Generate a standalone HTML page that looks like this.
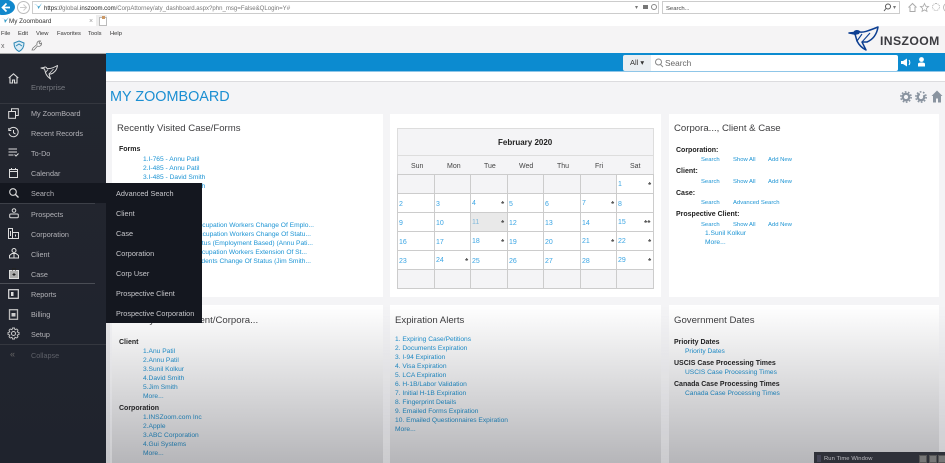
<!DOCTYPE html>
<html><head><meta charset="utf-8"><title>My Zoomboard</title>
<style>
html,body{margin:0;padding:0}
body{width:945px;height:463px;position:relative;overflow:hidden;background:#f4f4f6;font-family:"Liberation Sans",sans-serif}
#r div,#r span.a,#r svg{position:absolute}
.t{white-space:nowrap;line-height:10px;height:10px}
.l{color:#1c94d4;font-size:6.65px;margin-top:1px}
.b{color:#222;font-size:7px;font-weight:bold;margin-top:2px}
.h{color:#3d3d3f;font-size:9.6px;line-height:14px;height:14px;white-space:nowrap;margin-top:1px}
.m{color:#b2b2b7;font-size:7.25px;left:31px;margin-top:1px}
.s{color:#c8c8cc;font-size:7.3px;left:116px;margin-top:1px}
.c{color:#444;font-size:7px;margin-top:2px}
.d{color:#3aa5e4;font-size:7px;margin-top:2px}
.star{color:#555;font-size:5px;margin-top:2px}
.cm{color:#333;font-size:5.8px;margin-top:2px}
.q{font-size:5.9px}
svg{overflow:visible}
</style></head><body><div id="r" style="position:absolute;left:0;top:0;width:945px;height:463px;overflow:hidden;filter:blur(.3px)">

<!-- browser chrome -->
<div style="left:0;top:0;width:945px;height:26px;background:#fff"></div>
<div style="left:0;top:26px;width:945px;height:27px;background:#f5f4f5"></div>
<div style="left:0;top:53px;width:945px;height:1px;background:#aaa"></div>
<div style="left:-9px;top:-1px;width:24px;height:16px;border-radius:50%;background:#1188cc"></div>
<svg style="left:0;top:0" width="16" height="15"><path d="M10 7.5H3M6.5 3.5L2.5 7.5L6.5 11.5" fill="none" stroke="#fff" stroke-width="1.7"/></svg>
<div style="left:17px;top:1px;width:11px;height:11px;border:1px solid #bbb;border-radius:50%"></div>
<svg style="left:19px;top:3px" width="9" height="9"><path d="M7 4.5H1M4.5 1.5L7.5 4.5L4.5 7.5" fill="none" stroke="#ccc" stroke-width="1"/></svg>
<div style="left:32px;top:1px;width:625px;height:11px;border:1px solid #ccc"></div>
<svg style="left:34px;top:3px" width="9" height="8"><path d="M0 1L3 2L4.5 6L8 0L5 3.5Z" fill="#3c9fc9"/></svg>
<div class="t" style="left:44px;top:4px;font-size:6.05px;color:#777"><span style="color:#222">https://</span>global.<span style="color:#222">inszoom.com</span>/CorpAttorney/aty_dashboard.aspx?phn_msg=False&amp;QLogin=Y#</div>
<div class="t" style="left:635px;top:3px;font-size:6px;color:#777">▾</div>
<div style="left:643px;top:5px;width:5px;height:4px;background:#777"></div>
<div style="left:651px;top:4px;width:4px;height:4px;border:1px solid #888;border-radius:50%"></div>
<div style="left:662px;top:1px;width:236px;height:11px;border:1px solid #ccc"></div>
<div class="t" style="left:666px;top:4px;font-size:5.9px;color:#444">Search...</div>
<svg style="left:883px;top:3px" width="9" height="9"><circle cx="5" cy="3.5" r="2.5" fill="none" stroke="#555"/><path d="M3 5.5L1 8" stroke="#555"/></svg>
<div class="t" style="left:893px;top:3px;font-size:6px;color:#777">▾</div>
<svg style="left:908px;top:3px" width="9" height="9"><path d="M0.5 4.5L4.5 .5L8.5 4.5M2 4V8.5H7V4" fill="none" stroke="#aaa"/></svg>
<svg style="left:920px;top:3px" width="9" height="9"><path d="M4.5 .5L5.7 3.2L8.6 3.5L6.4 5.4L7 8.4L4.5 6.9L2 8.4L2.6 5.4L.4 3.5L3.3 3.2Z" fill="none" stroke="#aaa" stroke-width=".8"/></svg>
<div style="left:932px;top:3px;width:6px;height:6px;border:1.5px dotted #aaa;border-radius:50%"></div>
<div style="left:943px;top:3px;width:6px;height:7px;border:1px solid #bbb;border-radius:50%"></div>

<div style="left:0;top:15px;width:96px;height:11px;background:#fff"></div>
<div style="left:96px;top:15px;width:11px;height:11px;background:#eee"></div>
<div style="left:99px;top:17px;width:6px;height:7px;background:#fff;border:1px solid #bbb"></div>
<div style="left:102px;top:16px;width:3px;height:3px;background:#c96"></div>
<svg style="left:1px;top:17px" width="8" height="7"><path d="M0 1L3 2L4 6L8 0L5 3Z" fill="#3c9fc9"/></svg>
<div class="t" style="left:9px;top:17px;font-size:6.3px;color:#333">My Zoomboard</div>
<div class="t" style="left:89px;top:17px;font-size:7px;color:#999">×</div>

<div class="t cm" style="left:1px;top:27px">File</div>
<div class="t cm" style="left:18px;top:27px">Edit</div>
<div class="t cm" style="left:36px;top:27px">View</div>
<div class="t cm" style="left:57px;top:27px">Favorites</div>
<div class="t cm" style="left:88px;top:27px">Tools</div>
<div class="t cm" style="left:110px;top:27px">Help</div>
<div class="t" style="left:1px;top:42px;font-size:7px;color:#666">x</div>
<svg style="left:13px;top:40px" width="12" height="12"><path d="M6 1L11 3C11 7 9 10 6 11.5C3 10 1 7 1 3Z" fill="#dcecf5" stroke="#2d88b5"/><path d="M3 6L6 4L9 6" fill="none" stroke="#2d88b5"/></svg>
<svg style="left:31px;top:40px" width="11" height="11"><path d="M1 10L2 8L6 4.5C5.5 2.5 7 .5 9.5 1L8 3L9 4L10.5 3C10.8 5.5 8.5 7 6.5 6L3 10Z" fill="#fff" stroke="#777" stroke-width=".8"/></svg>

<!-- logo -->
<svg style="left:848px;top:26px" width="32" height="26" viewBox="0 0 32 26"><path d="M1 7L6 6.5C7 4.5 10 4 12 6C15 6.8 20 5 30 1C29 7 26 13 19 16L14 16L18 24C14 22 11 19 9 15L7 8Z" fill="none" stroke="#0d3f92" stroke-width="1.5" stroke-linejoin="round"/><path d="M1 7L6 6.5C7 4.5 10 4 12 6L11 8L7 9Z" fill="#0d3f92"/><path d="M14 16L22 7M9 15L14 8" stroke="#0d3f92" stroke-width="1.1" fill="none"/></svg>
<div class="t" style="left:880px;top:34px;height:14px;line-height:14px;font-size:12.2px;font-weight:bold;color:#3b3b40;letter-spacing:.4px">INSZOOM</div>

<!-- blue bar -->
<div style="left:106px;top:53px;width:839px;height:18px;background:#0c8bd0"></div>
<div style="left:106px;top:71px;width:839px;height:1px;background:#8fc6e8"></div>
<div style="left:106px;top:72px;width:839px;height:9px;background:#fff"></div>
<div style="left:106px;top:81px;width:839px;height:1px;background:#dcdcdf"></div>
<div style="left:623px;top:55px;width:29px;height:16px;background:#e9eef2;border-radius:2px 0 0 2px"></div>
<div class="t" style="left:630px;top:58px;font-size:7.5px;color:#333">All ▾</div>
<div style="left:651px;top:55px;width:247px;height:16px;background:#fff;border-radius:0 2px 2px 0"></div>
<svg style="left:654px;top:58px" width="10" height="10"><circle cx="4.5" cy="4" r="3" fill="none" stroke="#888"/><path d="M6.5 6.5L9 9" stroke="#888"/></svg>
<div class="t" style="left:665px;top:58px;font-size:8.3px;color:#666">Search</div>
<svg style="left:901px;top:58px" width="11" height="9"><path d="M0 3H2L6 .5V8.5L2 6H0Z" fill="#fff"/><path d="M8 2C9 3.5 9 5.5 8 7" stroke="#fff" fill="none"/></svg>
<svg style="left:917px;top:57px" width="9" height="10"><circle cx="4.5" cy="2.5" r="2.4" fill="#fff"/><path d="M1 9.5V7C1 6 2 5.5 4.5 5.5C7 5.5 8 6 8 7V9.5Z" fill="#fff"/></svg>

<!-- content header -->
<div class="t" style="left:110px;top:87px;height:20px;line-height:20px;font-size:14.4px;color:#1b8fd2">MY ZOOMBOARD</div>
<svg style="left:900px;top:91px" width="12" height="12" viewBox="0 0 14 14"><circle cx="7" cy="7" r="3.8" fill="none" stroke="#8a94a0" stroke-width="2.6"/><circle cx="7" cy="7" r="6" fill="none" stroke="#8a94a0" stroke-width="1.8" stroke-dasharray="2 1.8"/></svg>
<svg style="left:915px;top:91px" width="12" height="12" viewBox="0 0 14 14"><circle cx="7" cy="7" r="3.8" fill="none" stroke="#8a94a0" stroke-width="2.6" stroke-dasharray="16 5"/><circle cx="7" cy="7" r="6" fill="none" stroke="#8a94a0" stroke-width="1.8" stroke-dasharray="2 1.8"/></svg>
<svg style="left:931px;top:90px" width="12" height="13" viewBox="0 0 12 13"><path d="M6 .5L.5 6H2V12.5H5V8.5H7V12.5H10V6H11.5Z" fill="#8a94a0"/></svg>

<!-- gutter shade at the bottom -->
<div style="left:106px;top:305px;width:839px;height:158px;background:linear-gradient(rgba(40,40,50,0),rgba(40,40,50,.2))"></div>

<!-- panels -->
<div style="left:112px;top:114px;width:271px;height:183px;background:#fff"></div>
<div style="left:390px;top:114px;width:271px;height:183px;background:#fff"></div>
<div style="left:669px;top:114px;width:270px;height:183px;background:#fff"></div>
<div style="left:112px;top:305px;width:271px;height:158px;background:#fff"></div>
<div style="left:390px;top:305px;width:271px;height:158px;background:#fff"></div>
<div style="left:669px;top:305px;width:270px;height:158px;background:#fff"></div>

<!-- panel 1 -->
<div class="h" style="left:117px;top:121px">Recently Visited Case/Forms</div>
<div class="t b" style="left:119px;top:143px">Forms</div>
<div class="t l" style="left:143px;top:154px">1.I-765 - Annu Patil</div>
<div class="t l" style="left:143px;top:163px">2.I-485 - Annu Patil</div>
<div class="t l" style="left:143px;top:172px">3.I-485 - David Smith</div>
<div class="t l" style="left:143px;top:181px">4.I-485 - David Smith</div>
<div class="t l" style="left:143px;top:190px">5.I-485 - Jim Smith</div>
<div class="t l" style="right:631px;top:220px">H-1B Specialty Occupation Workers Change Of Emplo...</div>
<div class="t l" style="right:634px;top:229px">H-1B Specialty Occupation Workers Change Of Statu...</div>
<div class="t l" style="right:632px;top:238px">Adjustment Of Status (Employment Based) (Annu Pati...</div>
<div class="t l" style="right:638px;top:247px">H-1B Specialty Occupation Workers Extension Of St...</div>
<div class="t l" style="right:634px;top:256px">F-1 Academic Students Change Of Status (Jim Smith...</div>

<!-- calendar -->
<div style="left:397px;top:128px;width:257px;height:161px;background:#f4f4f6;border:1px solid #ddd;box-sizing:border-box"></div>
<div style="left:397px;top:155px;width:257px;height:1px;background:#ddd"></div>
<div style="left:397px;top:193px;width:257px;height:76px;background:#fff"></div>
<div style="left:397px;top:174px;width:219px;height:19px;background:#f4f4f6"></div>
<div style="left:616px;top:174px;width:38px;height:19px;background:#fff"></div>
<div style="left:470px;top:212px;width:37px;height:19px;background:#e9e9e9"></div>
<div style="left:397px;top:174px;width:257px;height:1px;background:#ccc"></div>
<div style="left:397px;top:193px;width:257px;height:1px;background:#ccc"></div>
<div style="left:397px;top:212px;width:257px;height:1px;background:#ccc"></div>
<div style="left:397px;top:231px;width:257px;height:1px;background:#ccc"></div>
<div style="left:397px;top:250px;width:257px;height:1px;background:#ccc"></div>
<div style="left:397px;top:269px;width:257px;height:1px;background:#ccc"></div>
<div style="left:397px;top:288px;width:257px;height:1px;background:#ccc"></div>
<div style="left:434px;top:174px;width:1px;height:115px;background:#ccc"></div>
<div style="left:470px;top:174px;width:1px;height:115px;background:#ccc"></div>
<div style="left:507px;top:174px;width:1px;height:115px;background:#ccc"></div>
<div style="left:543px;top:174px;width:1px;height:115px;background:#ccc"></div>
<div style="left:580px;top:174px;width:1px;height:115px;background:#ccc"></div>
<div style="left:616px;top:174px;width:1px;height:115px;background:#ccc"></div>
<div style="left:397px;top:174px;width:1px;height:115px;background:#ccc"></div>
<div style="left:653px;top:174px;width:1px;height:115px;background:#ccc"></div>
<div class="t" style="left:498px;top:138px;font-size:8px;font-weight:bold;color:#222">February 2020</div>
<div class="t c" style="left:411px;top:160px">Sun</div><div class="t c" style="left:447px;top:160px">Mon</div><div class="t c" style="left:484px;top:160px">Tue</div><div class="t c" style="left:519px;top:160px">Wed</div><div class="t c" style="left:557px;top:160px">Thu</div><div class="t c" style="left:595px;top:160px">Fri</div><div class="t c" style="left:630px;top:160px">Sat</div>
<div class="t d" style="left:618px;top:178px">1</div><div class="t star" style="left:648px;top:177px">♣</div>
<div class="t d" style="left:399px;top:198px">2</div><div class="t d" style="left:436px;top:198px">3</div><div class="t d" style="left:472px;top:197px">4</div><div class="t star" style="left:501px;top:196px">♣</div><div class="t d" style="left:509px;top:198px">5</div><div class="t d" style="left:545px;top:198px">6</div><div class="t d" style="left:582px;top:197px">7</div><div class="t star" style="left:611px;top:196px">♣</div><div class="t d" style="left:618px;top:198px">8</div>
<div class="t d" style="left:399px;top:217px">9</div><div class="t d" style="left:436px;top:217px">10</div><div class="t d" style="left:472px;top:216px;color:#7fb9da">11</div><div class="t star" style="left:501px;top:215px">♣</div><div class="t d" style="left:509px;top:217px">12</div><div class="t d" style="left:545px;top:217px">13</div><div class="t d" style="left:582px;top:217px">14</div><div class="t d" style="left:618px;top:216px">15</div><div class="t star" style="left:644px;top:215px">♣♣</div>
<div class="t d" style="left:399px;top:236px">16</div><div class="t d" style="left:436px;top:236px">17</div><div class="t d" style="left:472px;top:235px">18</div><div class="t star" style="left:501px;top:234px">♣</div><div class="t d" style="left:509px;top:236px">19</div><div class="t d" style="left:545px;top:236px">20</div><div class="t d" style="left:582px;top:235px">21</div><div class="t star" style="left:611px;top:234px">♣</div><div class="t d" style="left:618px;top:235px">22</div><div class="t star" style="left:648px;top:234px">♣</div>
<div class="t d" style="left:399px;top:255px">23</div><div class="t d" style="left:436px;top:254px">24</div><div class="t star" style="left:465px;top:253px">♣</div><div class="t d" style="left:472px;top:255px">25</div><div class="t d" style="left:509px;top:255px">26</div><div class="t d" style="left:545px;top:255px">27</div><div class="t d" style="left:582px;top:255px">28</div><div class="t d" style="left:618px;top:254px">29</div><div class="t star" style="left:648px;top:253px">♣</div>

<!-- panel 3 -->
<div class="h" style="left:674px;top:121px">Corpora..., Client &amp; Case</div>
<div class="t b" style="left:676px;top:144px">Corporation:</div>
<div class="t l q" style="left:701px;top:154px">Search</div><div class="t l q" style="left:733px;top:154px">Show All</div><div class="t l q" style="left:768px;top:154px">Add New</div>
<div class="t b" style="left:676px;top:165px">Client:</div>
<div class="t l q" style="left:701px;top:176px">Search</div><div class="t l q" style="left:733px;top:176px">Show All</div><div class="t l q" style="left:768px;top:176px">Add New</div>
<div class="t b" style="left:676px;top:187px">Case:</div>
<div class="t l q" style="left:701px;top:197px">Search</div><div class="t l q" style="left:733px;top:197px">Advanced Search</div>
<div class="t b" style="left:676px;top:208px">Prospective Client:</div>
<div class="t l q" style="left:701px;top:219px">Search</div><div class="t l q" style="left:733px;top:219px">Show All</div><div class="t l q" style="left:768px;top:219px">Add New</div>
<div class="t l" style="left:705px;top:228px">1.Sunil Kolkur</div>
<div class="t l" style="left:705px;top:237px">More...</div>

<!-- panel 4 -->
<div class="h" style="left:117px;top:313px">Recently Visited Client/Corpora...</div>
<div class="t b" style="left:119px;top:336px">Client</div>
<div class="t l" style="left:143px;top:346px">1.Anu Patil</div>
<div class="t l" style="left:143px;top:355px">2.Annu Patil</div>
<div class="t l" style="left:143px;top:364px">3.Sunil Kolkur</div>
<div class="t l" style="left:143px;top:373px">4.David Smith</div>
<div class="t l" style="left:143px;top:382px">5.Jim Smith</div>
<div class="t l" style="left:143px;top:391px">More...</div>
<div class="t b" style="left:119px;top:402px">Corporation</div>
<div class="t l" style="left:143px;top:412px">1.INSZoom.com Inc</div>
<div class="t l" style="left:143px;top:421px">2.Apple</div>
<div class="t l" style="left:143px;top:430px">3.ABC Corporation</div>
<div class="t l" style="left:143px;top:439px">4.Gui Systems</div>
<div class="t l" style="left:143px;top:448px">More...</div>

<!-- panel 5 -->
<div class="h" style="left:395px;top:313px">Expiration Alerts</div>
<div class="t l" style="left:395px;top:334px">1. Expiring Case/Petitions</div>
<div class="t l" style="left:395px;top:343px">2. Documents Expiration</div>
<div class="t l" style="left:395px;top:352px">3. I-94 Expiration</div>
<div class="t l" style="left:395px;top:361px">4. Visa Expiration</div>
<div class="t l" style="left:395px;top:370px">5. LCA Expiration</div>
<div class="t l" style="left:395px;top:379px">6. H-1B/Labor Validation</div>
<div class="t l" style="left:395px;top:388px">7. Initial H-1B Expiration</div>
<div class="t l" style="left:395px;top:397px">8. Fingerprint Details</div>
<div class="t l" style="left:395px;top:406px">9. Emailed Forms Expiration</div>
<div class="t l" style="left:395px;top:415px">10. Emailed Questionnaires Expiration</div>
<div class="t l" style="left:395px;top:424px">More...</div>

<!-- panel 6 -->
<div class="h" style="left:674px;top:313px">Government Dates</div>
<div class="t b" style="left:674px;top:336px">Priority Dates</div>
<div class="t l" style="left:685px;top:346px">Priority Dates</div>
<div class="t b" style="left:674px;top:357px">USCIS Case Processing Times</div>
<div class="t l" style="left:685px;top:367px">USCIS Case Processing Times</div>
<div class="t b" style="left:674px;top:378px">Canada Case Processing Times</div>
<div class="t l" style="left:685px;top:388px">Canada Case Processing Times</div>

<!-- panel gradient shades -->
<div style="left:112px;top:305px;width:271px;height:158px;background:linear-gradient(rgba(40,40,50,0),rgba(40,40,50,.34))"></div>
<div style="left:390px;top:305px;width:271px;height:158px;background:linear-gradient(rgba(40,40,50,0),rgba(40,40,50,.34))"></div>
<div style="left:669px;top:305px;width:270px;height:158px;background:linear-gradient(rgba(40,40,50,0),rgba(40,40,50,.34))"></div>

<!-- sidebar -->
<div style="left:0;top:54px;width:106px;height:409px;background:linear-gradient(#23262f,#1f232d)"></div>
<div style="left:106px;top:300px;width:4px;height:163px;background:linear-gradient(#e8e8ea,#c4c4c8)"></div>
<svg style="left:40px;top:65px" width="18" height="15" viewBox="0 0 18 15"><path d="M1 3L4 2.5C5 1.5 6.5 2 7 3.5C9 4 13 3 17.5 .5C17 5 14 8 11 9L9 9L10.5 14C8 12 6 10 5.5 7.5L4.5 4Z" fill="none" stroke="#ddd" stroke-width="1" stroke-linejoin="round"/><path d="M9 9L13.5 4M5.5 7.5L8 4.5" stroke="#ddd" stroke-width=".8" fill="none"/></svg>
<div class="t" style="left:31px;top:83px;font-size:7.5px;color:#777a80">Enterprise</div>
<svg style="left:8px;top:73px" width="11" height="11"><path d="M.7 5L5.5 .8L10.3 5M2 4V10H4.5V7H6.5V10H9V4" fill="none" stroke="#ddd" stroke-width="1.1"/></svg>
<div style="left:0;top:103px;width:106px;height:1px;background:#34373f"></div>

<div style="left:0;top:183px;width:106px;height:20px;background:#14171f"></div>
<div style="left:0;top:203px;width:95px;height:1px;background:#3d4048"></div>
<div style="left:0;top:283px;width:95px;height:1px;background:#4a4d55"></div>
<div style="left:0;top:344px;width:106px;height:1px;background:#34373f"></div>

<div class="t m" style="top:108px">My ZoomBoard</div>
<div class="t m" style="top:128px">Recent Records</div>
<div class="t m" style="top:148px">To-Do</div>
<div class="t m" style="top:168px">Calendar</div>
<div class="t m" style="top:188px">Search</div>
<div class="t m" style="top:209px">Prospects</div>
<div class="t m" style="top:229px">Corporation</div>
<div class="t m" style="top:249px">Client</div>
<div class="t m" style="top:269px">Case</div>
<div class="t m" style="top:289px">Reports</div>
<div class="t m" style="top:309px">Billing</div>
<div class="t m" style="top:329px">Setup</div>
<div class="t m" style="top:350px;color:#5d6068">Collapse</div>
<div class="t" style="left:10px;top:349px;font-size:9px;color:#666">«</div>

<svg style="left:8px;top:108px" width="11" height="11"><path d="M3.5 3.5V.7H10.3V7.5H7.5" fill="none" stroke="#ddd"/><rect x=".7" y="3.5" width="6.8" height="6.8" fill="none" stroke="#ddd"/></svg>
<svg style="left:8px;top:127px" width="11" height="11"><path d="M1.5 2.5A4.7 4.7 0 1 1 1 6.5M.8 1V3.5H3.3M5.5 3V5.8L7.5 7" fill="none" stroke="#ddd" stroke-width="1"/></svg>
<svg style="left:8px;top:148px" width="11" height="9"><path d="M.5 1H9M.5 4H9M.5 7H5.5M6.5 6.5L8 8L10.5 5.5" fill="none" stroke="#ddd" stroke-width="1"/></svg>
<svg style="left:9px;top:168px" width="10" height="10"><rect x=".5" y="1.5" width="8" height="8" fill="none" stroke="#ddd"/><path d="M.5 3.5H8.5M2.5 0V2M6.5 0V2" stroke="#ddd" stroke-width="1"/></svg>
<svg style="left:9px;top:188px" width="10" height="10"><circle cx="4" cy="4" r="3.3" fill="none" stroke="#ddd" stroke-width="1.1"/><path d="M6.5 6.5L9.5 9.5" stroke="#ddd" stroke-width="1.3"/></svg>
<svg style="left:9px;top:208px" width="10" height="11"><circle cx="5" cy="2.5" r="1.8" fill="none" stroke="#ddd"/><rect x=".7" y="6" width="8.6" height="3.8" rx="1" fill="none" stroke="#ddd"/></svg>
<svg style="left:8px;top:228px" width="11" height="11"><rect x=".5" y=".5" width="4" height="10" fill="none" stroke="#ddd"/><rect x="4.5" y="4.5" width="6" height="6" fill="none" stroke="#ddd"/><path d="M2.5 3V8M7.5 6.5V8.5" stroke="#ddd"/></svg>
<svg style="left:9px;top:248px" width="10" height="11"><circle cx="5" cy="2.5" r="2" fill="none" stroke="#ddd"/><path d="M.5 10V7.5L3 5.5H7L9.5 7.5V10ZM5 5.5V10" fill="none" stroke="#ddd"/></svg>
<svg style="left:9px;top:268px" width="10" height="11"><rect x=".5" y="2.5" width="9" height="8" fill="#aaa" stroke="#ddd"/><path d="M3.5 2.5V.5H6.5V2.5M5 5V8M3.5 6.5H6.5" stroke="#222" fill="none"/></svg>
<svg style="left:8px;top:289px" width="11" height="10"><rect x=".7" y=".7" width="9.6" height="8.6" fill="none" stroke="#ddd" stroke-width="1.2"/><rect x="3" y="3" width="2.5" height="4" fill="#ddd"/></svg>
<svg style="left:8px;top:309px" width="11" height="11"><rect x="1.5" y=".7" width="8" height="9.6" fill="none" stroke="#bbb" stroke-width="1.3"/><rect x="3.5" y="4" width="4" height="3.5" fill="#ccc"/></svg>
<svg style="left:7px;top:327px" width="13" height="13" viewBox="0 0 13 13"><circle cx="6.5" cy="6.5" r="2" fill="none" stroke="#ccc"/><path d="M5.5 1H7.5L8 2.8L9.8 2L11 3.2L10.2 5L12 5.5V7.5L10.2 8L11 9.8L9.8 11L8 10.2L7.5 12H5.5L5 10.2L3.2 11L2 9.8L2.8 8L1 7.5V5.5L2.8 5L2 3.2L3.2 2L5 2.8Z" fill="none" stroke="#ccc" stroke-width=".9"/></svg>

<!-- submenu -->
<div style="left:106px;top:183px;width:96px;height:140px;background:#14171f"></div>
<div class="t s" style="top:188px">Advanced Search</div>
<div class="t s" style="top:208px">Client</div>
<div class="t s" style="top:228px">Case</div>
<div class="t s" style="top:248px">Corporation</div>
<div class="t s" style="top:268px">Corp User</div>
<div class="t s" style="top:288px">Prospective Client</div>
<div class="t s" style="top:308px">Prospective Corporation</div>

<!-- run time window -->
<div style="left:814px;top:452px;width:131px;height:11px;background:#2f3139"></div>
<div style="left:817px;top:455px;width:4px;height:7px;background:#445"></div>
<div class="t" style="left:824px;top:454px;font-size:5.8px;color:#bdbdc2;letter-spacing:.1px">Run Time Window</div>
<div style="left:919px;top:455px;width:6px;height:6px;background:#777;border:1px solid #555"></div>
<div style="left:929px;top:455px;width:6px;height:6px;background:#777;border:1px solid #555"></div>
<div style="left:938px;top:455px;width:6px;height:6px;background:#777;border:1px solid #555"></div>
</div></body></html>
